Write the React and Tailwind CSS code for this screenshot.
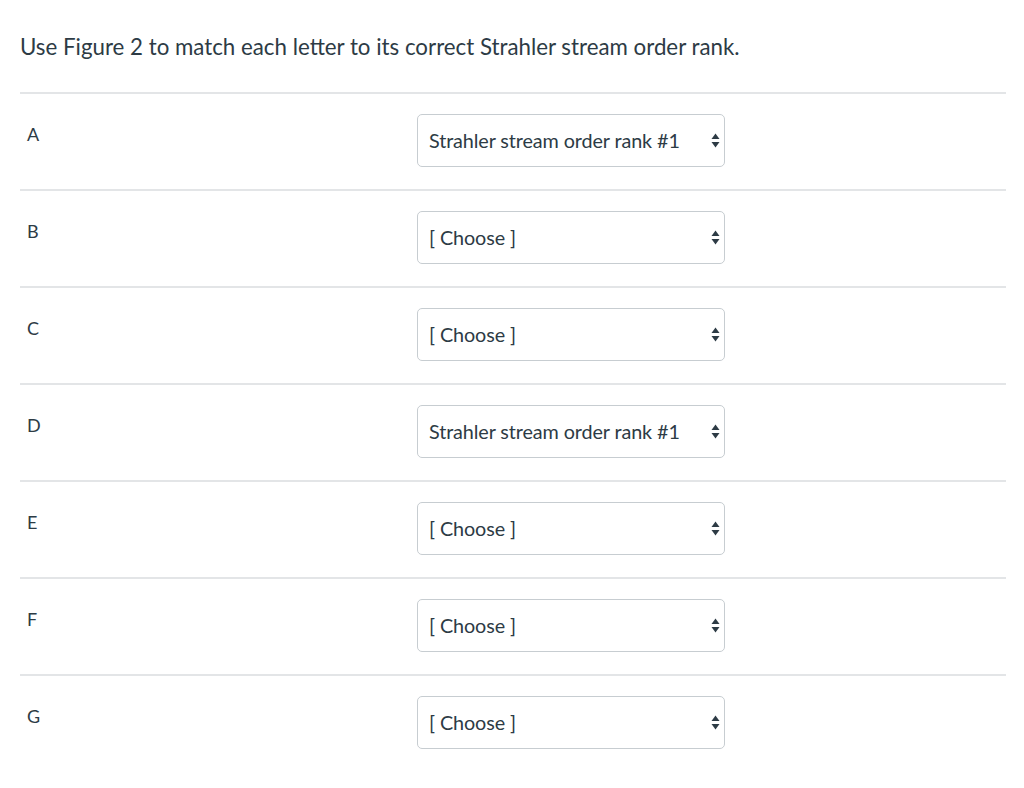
const rows = [
  { letter: 'A', value: 'Strahler stream order rank #1' },
  { letter: 'B', value: '[ Choose ]' },
  { letter: 'C', value: '[ Choose ]' },
  { letter: 'D', value: 'Strahler stream order rank #1' },
  { letter: 'E', value: '[ Choose ]' },
  { letter: 'F', value: '[ Choose ]' },
  { letter: 'G', value: '[ Choose ]' },
];

const Arrows = () => (
  <svg width="9" height="15" viewBox="0 0 9 15" className="shrink-0">
    <path d="M4.5 0.5 L8.5 6 L0.5 6 Z" fill="#2d3b45" />
    <path d="M0.5 9 L8.5 9 L4.5 14.5 Z" fill="#2d3b45" />
  </svg>
);

const App = () => {
  return (
    <div className="bg-white min-h-[788px] pl-5 pr-[18px] pt-[30px] text-[#2d3b45]" style={{ fontFamily: 'Lato, "Open Sans", sans-serif' }}>
      <p className="text-[22.3px] leading-[34px] mb-[28px]">
        Use Figure 2 to match each letter to its correct Strahler stream order rank.
      </p>
      <div>
        {rows.map((r) => (
          <div key={r.letter} className="border-t-2 border-[#e3e5e7] flex h-[97px] pt-[20px]">
            <div className="w-[397px] pl-[7px] pt-[9px] text-[18px] leading-[22px]">{r.letter}</div>
            <div className="w-[308px] h-[53px] border border-[#c7cdd1] rounded-[5px] flex items-center justify-between pl-[11px] pr-[4px]">
              <span className="text-[19.8px] tracking-[-0.1px]">{r.value}</span>
              <Arrows />
            </div>
          </div>
        ))}
      </div>
    </div>
  );
};

export default App;
